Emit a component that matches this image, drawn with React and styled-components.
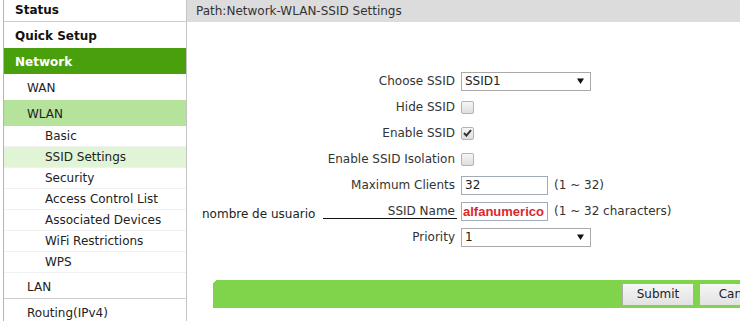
import React from "react";
import styled, { createGlobalStyle } from "styled-components";

const GlobalStyle = createGlobalStyle`
  html, body {
    margin: 0;
    padding: 0;
    background: #ffffff;
    overflow: hidden;
  }
  body {
    font-family: "DejaVu Sans", Verdana, sans-serif;
    font-size: 12px;
    color: #222;
  }
`;

const Page = styled.div`
  display: flex;
  width: 790px;
  height: 321px;
  padding-left: 3px;
  overflow: hidden;
`;

const Sidebar = styled.div`
  flex: 0 0 182px;
  border-left: 1px solid #b4b4b4;
  border-right: 1px solid #c4c4c4;
  overflow: hidden;
`;

const MenuList = styled.div`
  display: flex;
  flex-direction: column;
  margin-top: -4px;
`;

const MenuItem = styled.div`
  box-sizing: border-box;
  display: flex;
  align-items: center;
  height: ${(p) => (p.$level === 2 ? "21px" : "26px")};
  padding-top: ${(p) => (p.$level === 2 ? "0" : "2px")};
  padding-left: ${(p) => [11, 23, 41][p.$level]}px;
  font-weight: ${(p) => (p.$bold ? "bold" : "normal")};
  color: ${(p) => (p.$active ? "#ffffff" : p.$bold ? "#111" : "#222")};
  background: ${(p) =>
    p.$active ? "#49a00c" : p.$open ? "#b6e39b" : p.$current ? "#e1f5d6" : "transparent"};
  border-bottom: 1px solid ${(p) => (p.$level === 2 ? "#f1f1f1" : p.$line ? "#cfcfcf" : "transparent")};
  white-space: nowrap;
`;

const Main = styled.div`
  flex: 0 0 600px;
  display: flex;
  flex-direction: column;
`;

const PathBar = styled.div`
  display: flex;
  align-items: center;
  justify-content: space-between;
  height: 22px;
  padding: 0 5px 0 9px;
  background: #dcdcdc;
  color: #333;
`;

const Logout = styled.span`
  text-decoration: underline;
  color: #222;
`;

const Form = styled.div`
  display: grid;
  grid-template-columns: 268px 1fr;
  grid-auto-rows: 26px;
  column-gap: 6px;
  margin-top: 46px;
`;

const Label = styled.div`
  position: relative;
  display: flex;
  align-items: center;
  justify-content: flex-end;
  color: #333;
  white-space: nowrap;
`;

const Field = styled.div`
  display: flex;
  align-items: center;
  gap: 6px;
  color: #333;
  white-space: nowrap;
`;

const Note = styled.span`
  position: absolute;
  left: 15px;
  top: 9px;
  color: #222;
`;

const NoteLine = styled.span`
  position: absolute;
  left: 136px;
  right: -2px;
  top: 20px;
  border-bottom: 1px solid #111;
`;

const SelectBox = styled.div`
  box-sizing: border-box;
  display: flex;
  align-items: center;
  justify-content: space-between;
  width: 130px;
  height: 19px;
  padding: 0 6px 0 3px;
  border: 1px solid #a9a9a9;
  background: #fff;
  color: #222;
`;

const TextBox = styled.div`
  box-sizing: border-box;
  display: flex;
  align-items: center;
  width: 87px;
  height: 19px;
  padding: 0 ${(p) => (p.$alert ? "1px" : "3px")};
  border: 1px solid #a3aab8;
  background: #fff;
  color: ${(p) => (p.$alert ? "#e0262c" : "#222")};
  font-family: ${(p) => (p.$alert ? '"Liberation Sans", Arial, sans-serif' : "inherit")};
  font-size: ${(p) => (p.$alert ? "13px" : "12px")};
  font-weight: ${(p) => (p.$alert ? "bold" : "normal")};
  overflow: hidden;
`;

const Check = styled.div`
  box-sizing: border-box;
  display: flex;
  align-items: center;
  justify-content: center;
  width: 13px;
  height: 13px;
  border: 1px solid #b3b3b3;
  border-radius: 2px;
  background: linear-gradient(#f6f6f6, #dedede);
`;

const ActionBar = styled.div`
  position: relative;
  display: flex;
  justify-content: flex-end;
  align-items: center;
  gap: 5px;
  height: 28px;
  margin: 30px 0 0 26px;
  padding-right: 8px;
  background: #80d44b;
  &::before {
    content: "";
    position: absolute;
    left: 0;
    top: 0;
    width: 4px;
    height: 4px;
    background: linear-gradient(135deg, #fff 50%, transparent 50%);
  }
`;

const Button = styled.div`
  box-sizing: border-box;
  display: flex;
  align-items: center;
  justify-content: center;
  width: ${(p) => p.$w}px;
  height: 23px;
  border: 1px solid #acacac;
  background: linear-gradient(#f6f6f6, #e2e2e2);
  color: #222;
`;

const Arrow = () => (
  <svg width="7" height="6" viewBox="0 0 7 6">
    <path d="M0 0.5 H7 L3.5 6 Z" fill="#111" />
  </svg>
);

const Tick = () => (
  <svg width="9" height="8" viewBox="0 0 9 8">
    <path d="M1 4 L3.4 6.6 L8 1.2" stroke="#333" strokeWidth="2" fill="none" />
  </svg>
);

const menu = [
  { text: "Status", level: 0, bold: true, line: true },
  { text: "Quick Setup", level: 0, bold: true },
  { text: "Network", level: 0, bold: true, active: true },
  { text: "WAN", level: 1 },
  { text: "WLAN", level: 1, open: true },
  { text: "Basic", level: 2 },
  { text: "SSID Settings", level: 2, current: true },
  { text: "Security", level: 2 },
  { text: "Access Control List", level: 2 },
  { text: "Associated Devices", level: 2 },
  { text: "WiFi Restrictions", level: 2 },
  { text: "WPS", level: 2 },
  { text: "LAN", level: 1, line: true },
  { text: "Routing(IPv4)", level: 1 },
];

export default function App() {
  return (
    <>
      <GlobalStyle />
      <Page>
        <Sidebar>
          <MenuList>
            {menu.map((m) => (
              <MenuItem
                key={m.text}
                $level={m.level}
                $bold={m.bold}
                $active={m.active}
                $open={m.open}
                $current={m.current}
                $line={m.line}
              >
                {m.text}
              </MenuItem>
            ))}
          </MenuList>
        </Sidebar>
        <Main>
          <PathBar>
            <span>Path:Network-WLAN-SSID Settings</span>
            <Logout>Logout</Logout>
          </PathBar>
          <Form>
            <Label>Choose SSID</Label>
            <Field>
              <SelectBox>
                SSID1 <Arrow />
              </SelectBox>
            </Field>

            <Label>Hide SSID</Label>
            <Field>
              <Check />
            </Field>

            <Label>Enable SSID</Label>
            <Field>
              <Check>
                <Tick />
              </Check>
            </Field>

            <Label>Enable SSID Isolation</Label>
            <Field>
              <Check />
            </Field>

            <Label>Maximum Clients</Label>
            <Field>
              <TextBox>32</TextBox>
              (1 ~ 32)
            </Field>

            <Label>
              <Note>nombre de usuario</Note>
              <NoteLine />
              SSID Name
            </Label>
            <Field>
              <TextBox $alert>alfanumerico</TextBox>
              (1 ~ 32 characters)
            </Field>

            <Label>Priority</Label>
            <Field>
              <SelectBox>
                1 <Arrow />
              </SelectBox>
            </Field>
          </Form>
          <ActionBar>
            <Button $w={72}>Submit</Button>
            <Button $w={80}>Cancel</Button>
          </ActionBar>
        </Main>
      </Page>
    </>
  );
}
